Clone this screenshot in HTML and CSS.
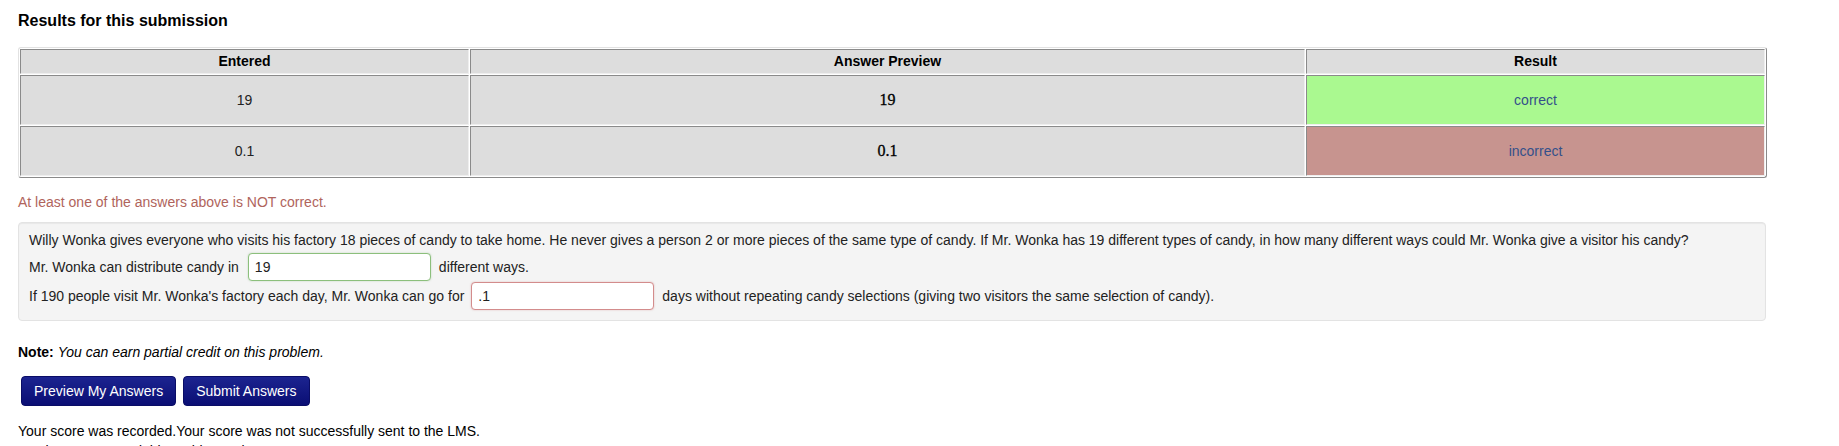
FILE: index.html
```html
<!DOCTYPE html>
<html>
<head>
  <title>Problem Results</title>
  <link rel="stylesheet" href="styles.css">
</head>
<body>
  <div class="page">
    <h2 class="results-title">Results for this submission</h2>

    <table class="attempt-results">
      <colgroup>
        <col class="col-entered">
        <col class="col-preview">
        <col class="col-result">
      </colgroup>
      <thead>
        <tr>
          <th>Entered</th>
          <th>Answer Preview</th>
          <th>Result</th>
        </tr>
      </thead>
      <tbody>
        <tr>
          <td>19</td>
          <td class="preview">19</td>
          <td class="result-ok">correct</td>
        </tr>
        <tr>
          <td>0.1</td>
          <td class="preview">0.1</td>
          <td class="result-bad">incorrect</td>
        </tr>
      </tbody>
    </table>

    <p class="text-error">At least one of the answers above is NOT correct.</p>

    <div class="problem well">
      <div class="problem-line">Willy Wonka gives everyone who visits his factory 18 pieces of candy to take home. He never gives a person 2 or more pieces of the same type of candy. If Mr. Wonka has 19 different types of candy, in how many different ways could Mr. Wonka give a visitor his candy?</div>
      <div class="problem-line answer-line first">
        <span>Mr. Wonka can distribute candy in</span>
        <input type="text" class="answer correct" value="19">
        <span>different ways.</span>
      </div>
      <div class="problem-line answer-line second">
        <span>If 190 people visit Mr. Wonka's factory each day, Mr. Wonka can go for</span>
        <input type="text" class="answer incorrect" value=".1">
        <span>days without repeating candy selections (giving two visitors the same selection of candy).</span>
      </div>
    </div>

    <p class="note"><b>Note:</b> <i>You can earn partial credit on this problem.</i></p>

    <div class="submit-buttons">
      <button type="button" class="btn-primary">Preview My Answers</button>
      <button type="button" class="btn-primary">Submit Answers</button>
    </div>

    <p class="score-msg">Your score was recorded.Your score was not successfully sent to the LMS.<br>
    You have attempted this problem 1 time.</p>
  </div>
</body>
</html>
```

FILE: styles.css
```css
body {
  margin: 0;
  font-family: "Liberation Sans", Arial, sans-serif;
  font-size: 14px;
  line-height: 20px;
  color: #222;
  background-color: #ffffff;
}

.page {
  width: 1748px;
  padding: 11px 0 0 18px;
}

.results-title {
  margin: 0;
  font-size: 16px;
  line-height: 20px;
  color: #000;
}

/* results table */
.attempt-results {
  margin-top: 16px;
  width: 1749px;
  table-layout: fixed;
  border-collapse: separate;
  border-spacing: 1px;
  border: 1px solid;
  border-color: #e2e2e2 #8a8a8a #8a8a8a #e2e2e2;
  border-radius: 3px;
}

.col-entered { width: 449px; }
.col-preview { width: 835px; }

.attempt-results th,
.attempt-results td {
  box-sizing: border-box;
  border: 1px solid;
  border-color: #8a8a8a #eeeeee #eeeeee #8a8a8a;
  background-color: #dddddd;
  text-align: center;
  vertical-align: middle;
  padding: 2px 5px;
}

.attempt-results th {
  height: 25px;
  font-size: 14px;
  line-height: 19px;
  color: #000;
}

.attempt-results td {
  height: 50px;
  font-size: 14px;
}

.attempt-results td.preview {
  font-family: "Liberation Serif", "Times New Roman", serif;
  font-size: 16px;
  color: #000;
  -webkit-text-stroke: 0.3px #000;
}

.attempt-results td.result-ok {
  background-color: #aaf990;
  color: #34508a;
}

.attempt-results td.result-bad {
  background-color: #c7948f;
  color: #34508a;
}

.text-error {
  margin: 14px 0 0;
  color: #b0645c;
}

/* problem box */
.well {
  margin-top: 10px;
  padding: 7px 0 10px 10px;
  background-color: #f4f4f4;
  border: 1px solid #e3e3e3;
  border-radius: 4px;
  box-shadow: inset 0 1px 1px rgba(0, 0, 0, 0.05);
}

.problem-line {
  line-height: 20px;
}

.answer-line {
  display: flex;
  align-items: center;
}

.answer-line.first { padding-top: 3px; }
.answer-line.second { padding-top: 1px; }

.answer {
  box-sizing: border-box;
  width: 183px;
  height: 28px;
  margin: 0 8px 0 9px;
  padding: 4px 6px;
  font-family: "Liberation Sans", Arial, sans-serif;
  font-size: 14px;
  color: #222;
  background: #fff;
  border: 1px solid #ccc;
  border-radius: 4px;
}

.answer.correct {
  border-color: #8cbf7c;
  box-shadow: 0 0 2px rgba(90, 160, 80, 0.35);
}

.answer.incorrect {
  margin-left: 7px;
  border-color: #d38c8c;
  box-shadow: 0 0 2px rgba(190, 80, 80, 0.35);
}

.note {
  margin: 21px 0 0;
  color: #000;
}

.submit-buttons {
  display: flex;
  gap: 7px;
  margin: 14px 0 0 3px;
}

.btn-primary {
  height: 30px;
  padding: 0 12px;
  font-family: "Liberation Sans", Arial, sans-serif;
  font-size: 14px;
  color: #fff;
  background-color: #0f1480;
  background-image: linear-gradient(to bottom, #1c2490, #0a0e74);
  border: 1px solid #0a0d66;
  border-radius: 4px;
  cursor: pointer;
}

.score-msg {
  margin: 15px 0 0;
  color: #000;
}
```
